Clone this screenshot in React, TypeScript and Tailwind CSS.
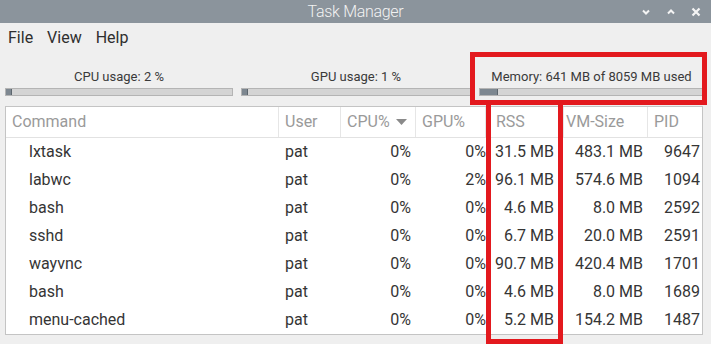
import React from 'react';

const rows = [
  { cmd: 'lxtask', user: 'pat', cpu: '0%', gpu: '0%', rss: '31.5 MB', vm: '483.1 MB', pid: '9647' },
  { cmd: 'labwc', user: 'pat', cpu: '0%', gpu: '2%', rss: '96.1 MB', vm: '574.6 MB', pid: '1094' },
  { cmd: 'bash', user: 'pat', cpu: '0%', gpu: '0%', rss: '4.6 MB', vm: '8.0 MB', pid: '2592' },
  { cmd: 'sshd', user: 'pat', cpu: '0%', gpu: '0%', rss: '6.7 MB', vm: '20.0 MB', pid: '2591' },
  { cmd: 'wayvnc', user: 'pat', cpu: '0%', gpu: '0%', rss: '90.7 MB', vm: '420.4 MB', pid: '1701' },
  { cmd: 'bash', user: 'pat', cpu: '0%', gpu: '0%', rss: '4.6 MB', vm: '8.0 MB', pid: '1689' },
  { cmd: 'menu-cached', user: 'pat', cpu: '0%', gpu: '0%', rss: '5.2 MB', vm: '154.2 MB', pid: '1487' },
];

const cols = 'grid grid-cols-[273px_62px_75px_70px_78px_84px_55px]';

function Gauge({ label, fill }: { label: string; fill: string }) {
  return (
    <div className="flex flex-col items-center">
      <div className="text-[13px] leading-[16px] text-[#3a3a3a]">{label}</div>
      <div className="mt-[3px] h-[8px] w-full border border-[#b4b4b4] bg-[#d4d4d4]">
        <div className={`h-full border-r border-[#5d666e] bg-[#7d8790] ${fill}`} />
      </div>
    </div>
  );
}

export default function App() {
  return (
    <div className="relative h-[344px] w-[711px] overflow-hidden bg-[#efefef] font-['Roboto',sans-serif]">
      {/* title bar */}
      <div className="relative flex h-[23px] items-center justify-center bg-[#8b949c]">
        <span className="text-[16px] font-light tracking-[-0.3px] text-[#f2f2f2]">Task Manager</span>
        <div className="absolute right-[10px] top-0 flex h-full items-center gap-[15px]">
          <svg width="10" height="8" viewBox="0 0 10 8">
            <path d="M2 2.5 L5 5.5 L8 2.5" stroke="#f4f4f4" strokeWidth="2" fill="none" />
          </svg>
          <svg width="10" height="8" viewBox="0 0 10 8">
            <path d="M2 5.5 L5 2.5 L8 5.5" stroke="#f4f4f4" strokeWidth="2" fill="none" />
          </svg>
          <svg width="10" height="10" viewBox="0 0 10 10">
            <path d="M1.5 1.5 L8.5 8.5 M8.5 1.5 L1.5 8.5" stroke="#f4f4f4" strokeWidth="2.2" fill="none" />
          </svg>
        </div>
      </div>

      {/* menu */}
      <div className="flex h-[30px] items-center gap-[14px] pl-[8px] text-[16px] text-[#2e2e2e]">
        <span>File</span>
        <span>View</span>
        <span>Help</span>
      </div>

      {/* gauges */}
      <div className="mt-[16px] grid grid-cols-[228px_230px_225px] gap-x-[8px] pl-[5px]">
        <Gauge label="CPU usage: 2 %" fill="w-[6px]" />
        <Gauge label="GPU usage: 1 %" fill="w-[6px]" />
        <Gauge label="Memory: 641 MB of 8059 MB used" fill="w-[18px]" />
      </div>

      {/* process table */}
      <div className="ml-[5px] mt-[10px] w-[698px] border border-[#c4c4c4] bg-white text-[16px]">
        <div className={`${cols} h-[31px] border-b border-[#e2e2e2] text-[#9a9a9a]`}>
          <div className="flex items-center border-r border-[#e6e6e6] pl-[6px]">Command</div>
          <div className="flex items-center border-r border-[#e6e6e6] pl-[6px]">User</div>
          <div className="flex items-center gap-[6px] border-r border-[#e6e6e6] pl-[6px]">
            CPU%
            <svg width="11" height="7" viewBox="0 0 11 7">
              <path d="M0 0 L11 0 L5.5 6 Z" fill="#8a8a8a" />
            </svg>
          </div>
          <div className="flex items-center border-r border-[#e6e6e6] pl-[6px]">GPU%</div>
          <div className="flex items-center border-r border-[#e6e6e6] pl-[10px]">RSS</div>
          <div className="flex items-center border-r border-[#e6e6e6] pl-[2px]">VM-Size</div>
          <div className="flex items-center pl-[6px]">PID</div>
        </div>
        {rows.map((r, i) => (
          <div key={i} className={`${cols} h-[28px] items-center text-[#353535]`}>
            <div className="pl-[23px]">{r.cmd}</div>
            <div className="pl-[6px]">{r.user}</div>
            <div className="pr-[5px] text-right">{r.cpu}</div>
            <div className="pr-[0px] text-right">{r.gpu}</div>
            <div className="pr-[10px] text-right">{r.rss}</div>
            <div className="pr-[5px] text-right">{r.vm}</div>
            <div className="pr-[3px] text-right">{r.pid}</div>
          </div>
        ))}
      </div>

      {/* red highlight boxes */}
      <div className="absolute left-[470px] top-[52px] h-[53px] w-[237px] border-[5px] border-[#e3191e]" />
      <div className="absolute left-[486px] top-[100px] h-[244px] w-[77px] border-[5px] border-[#e3191e]" />
    </div>
  );
}
